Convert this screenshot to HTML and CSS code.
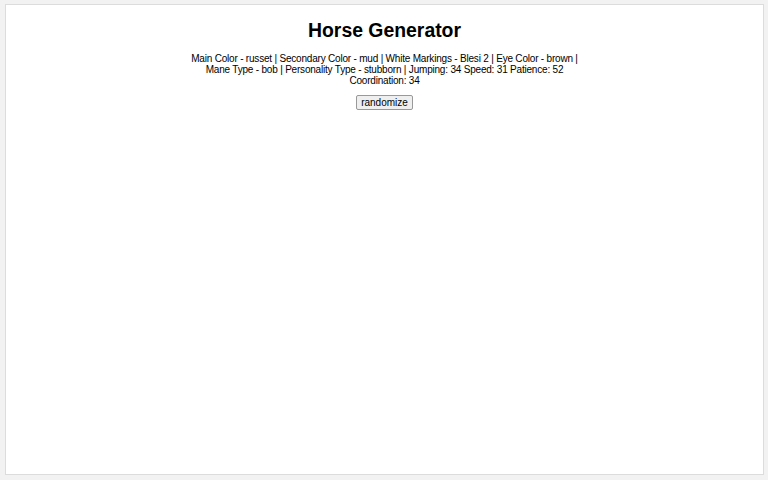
FILE: index.html
```html
<!DOCTYPE html>
<html lang="en">
<head>
  <meta charset="UTF-8">
  <meta name="viewport" content="width=device-width, initial-scale=1.0">
  <title>Horse Generator</title>
  <link rel="stylesheet" href="styles.css">
</head>
<body>
  <div class="page">
    <h1>Horse Generator</h1>
    <p id="horse">Main Color - russet | Secondary Color - mud | White Markings - Blesi 2 | Eye Color - brown | Mane Type - bob | Personality Type - stubborn | Jumping: 34 Speed: 31 Patience: 52 Coordination: 34</p>
    <button type="button">randomize</button>
  </div>
</body>
</html>
```

FILE: styles.css
```css
html, body {
  height: 100%;
}
body {
  margin: 0;
  padding: 4px 4px 5px 5px;
  box-sizing: border-box;
  background-color: #f2f2f2;
  font-family: "Liberation Sans", Arial, sans-serif;
}
.page {
  height: 100%;
  box-sizing: border-box;
  background-color: #fff;
  border: 1px solid #dcdcdc;
  text-align: center;
  padding-top: 14px;
}
h1 {
  font-size: 19.4px;
  margin: 0 0 11px;
  color: #000;
}
#horse {
  font-size: 10px;
  line-height: 11px;
  letter-spacing: -0.2px;
  max-width: 392px;
  margin: 0 auto 6px;
  color: #000;
}
button {
  font-family: "Liberation Sans", Arial, sans-serif;
  font-size: 10px;
  padding: 1px 4px;
  background-color: #efefef;
  border: 1px solid #999;
  border-radius: 2px;
}
```
